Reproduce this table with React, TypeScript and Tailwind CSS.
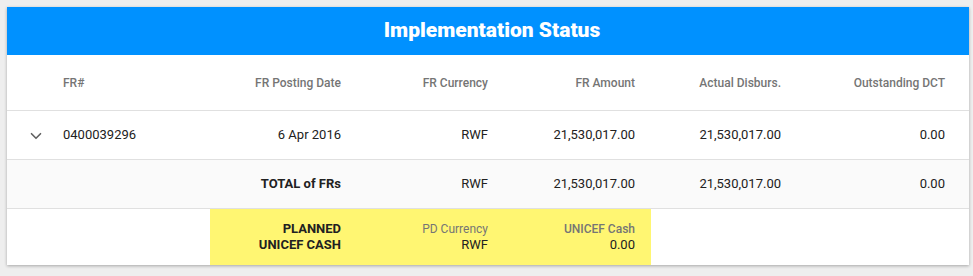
import React from 'react';
import { ChevronDown } from 'lucide-react';

const font = { fontFamily: 'Roboto, "Liberation Sans", sans-serif' };

const cols = 'grid grid-cols-[56px_147px_147px_147px_147px_146px_1fr]';

const headers = ['FR Posting Date', 'FR Currency', 'FR Amount', 'Actual Disburs.'];

export default function App() {
  return (
    <div className="min-h-screen bg-[#eeeeee] p-[7px]" style={font}>
      <div className="w-[962px] bg-white shadow-[0_1px_3px_rgba(0,0,0,0.3)]">
        {/* Title bar */}
        <div className="h-12 bg-[#0091ff] flex items-center justify-center pl-2">
          <h2 className="text-white text-[21px] font-black">Implementation Status</h2>
        </div>

        {/* Column headers */}
        <div className={`${cols} h-[56px] items-center border-b border-[#e0e0e0] text-[12px] font-medium text-[#757575]`}>
          <div />
          <div>FR#</div>
          {headers.map((h) => (
            <div key={h} className="text-right pr-4">{h}</div>
          ))}
          <div className="text-right pr-[24px]">Outstanding DCT</div>
        </div>

        {/* FR row */}
        <div className={`${cols} h-[49px] items-center border-b border-[#e0e0e0] text-[13px] text-[#212121]`}>
          <div className="flex justify-center pl-[2px]">
            <ChevronDown className="w-[18px] h-[18px] text-[#616161] mt-[2px]" strokeWidth={2.2} />
          </div>
          <div>0400039296</div>
          <div className="text-right pr-4">6 Apr 2016</div>
          <div className="text-right pr-4">RWF</div>
          <div className="text-right pr-4">21,530,017.00</div>
          <div className="text-right pr-4">21,530,017.00</div>
          <div className="text-right pr-[24px]">0.00</div>
        </div>

        {/* Totals */}
        <div className={`${cols} h-[49px] items-center border-b border-[#e0e0e0] bg-[#fafafa] text-[13px] text-[#212121]`}>
          <div />
          <div />
          <div className="text-right pr-4 font-bold">TOTAL of FRs</div>
          <div className="text-right pr-4">RWF</div>
          <div className="text-right pr-4">21,530,017.00</div>
          <div className="text-right pr-4">21,530,017.00</div>
          <div className="text-right pr-[24px]">0.00</div>
        </div>

        {/* Planned UNICEF cash */}
        <div className={`${cols} h-[56px] text-[13px]`}>
          <div />
          <div />
          <div className="col-span-3 bg-[#fff672] grid grid-cols-3 items-center">
            <div className="text-right pr-4 font-bold text-[#212121] leading-[16px]">
              PLANNED
              <br />
              UNICEF CASH
            </div>
            <div className="text-right pr-4 leading-[16px]">
              <div className="text-[12px] text-[#757575]">PD Currency</div>
              <div className="text-[#212121]">RWF</div>
            </div>
            <div className="text-right pr-4 leading-[16px]">
              <div className="text-[12px] font-medium text-[#757575]">UNICEF Cash</div>
              <div className="text-[#212121]">0.00</div>
            </div>
          </div>
        </div>
      </div>
    </div>
  );
}
